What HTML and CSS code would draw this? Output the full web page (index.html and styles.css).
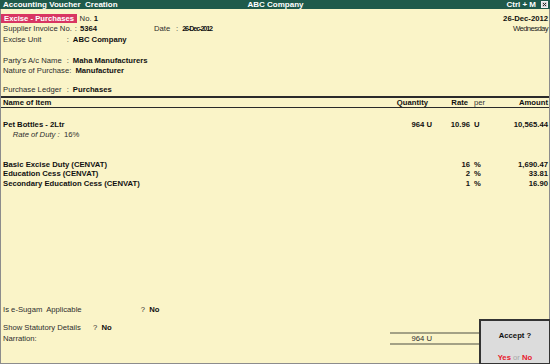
FILE: index.html
```html
<!DOCTYPE html>
<html>
<head>
<meta charset="utf-8">
<link rel="stylesheet" href="styles.css">
</head>
<body>
<div class="win">
  <div class="titlebar">
    <span class="t-left">Accounting Voucher&nbsp; Creation</span>
    <span class="t-center">ABC Company</span>
    <span class="t-right">Ctrl + M
      <svg class="close" viewBox="0 0 7 7"><rect x=".5" y=".5" width="6" height="6" fill="#d6d6d6" stroke="#f2f2f2"/><path d="M2 2l3 3M5 2l-3 3" stroke="#2a2a2a" stroke-width="1"/></svg>
    </span>
  </div>
  <div class="body">
    <div class="head">
      <div class="row">
        <span class="vtype">Excise - Purchases</span>
        <span class="vno">No. <b>1</b></span>
        <span class="rdate">26-Dec-2012</span>
      </div>
      <div class="row">
        <div class="fld sup"><span class="lbl">Supplier Invoice No.</span><span class="colon">:</span><span class="val">5364</span></div>
        <div class="fld"><span class="lbl l-date">Date</span><span class="colon">:</span><span class="val cond">26-Dec-2012</span></div>
        <span class="rday">Wednesday</span>
      </div>
      <div class="row r3">
        <div class="fld"><span class="lbl">Excise Unit</span><span class="colon">:</span><span class="val">ABC Company</span></div>
      </div>
      <div class="row r4">
        <div class="fld"><span class="lbl">Party's A/c Name</span><span class="colon">:</span><span class="val">Maha Manufacturers</span></div>
      </div>
      <div class="row">
        <div class="fld"><span class="lbl">Nature of Purchase</span><span class="colon">:</span><span class="val">Manufacturer</span></div>
      </div>
      <div class="row r6">
        <div class="fld"><span class="lbl">Purchase Ledger</span><span class="colon">:</span><span class="val">Purchases</span></div>
      </div>
    </div>

    <div class="items">
      <div class="grid ghead">
        <span>Name of Item</span>
        <span class="r h-qty">Quantity</span>
        <span class="r h-rate">Rate</span>
        <span class="per h-per">per</span>
        <span class="r">Amount</span>
      </div>
      <div class="grid bold item1">
        <span>Pet Bottles - 2Ltr</span>
        <span class="r">964 U</span>
        <span class="r">10.96</span>
        <span class="per">U</span>
        <span class="r">10,565.44</span>
      </div>
      <div class="grid duty">
        <span><i>Rate of Duty :</i>&nbsp; 16%</span>
      </div>
      <div class="grid bold tax1">
        <span>Basic Excise Duty (CENVAT)</span>
        <span></span>
        <span class="r">16</span>
        <span class="per">%</span>
        <span class="r">1,690.47</span>
      </div>
      <div class="grid bold">
        <span>Education Cess (CENVAT)</span>
        <span></span>
        <span class="r">2</span>
        <span class="per">%</span>
        <span class="r">33.81</span>
      </div>
      <div class="grid bold">
        <span>Secondary Education Cess (CENVAT)</span>
        <span></span>
        <span class="r">1</span>
        <span class="per">%</span>
        <span class="r">16.90</span>
      </div>
    </div>

    <div class="foot">
      <div class="frow esugam"><span class="flbl w1">Is e-Sugam&nbsp; Applicable</span><span>?</span><b class="ans">No</b></div>
      <div class="frow stat"><span class="flbl w2">Show Statutory Details</span><span>?</span><b class="ans">No</b></div>
      <div class="grid narr">
        <span>Narration:</span>
        <div class="total"><span>964 U</span></div>
      </div>
    </div>
  </div>

  <div class="accept">
    <div class="acc-q">Accept ?</div>
    <div class="acc-a"><span class="yn">Yes</span> <span class="or">or</span> <span class="yn">No</span></div>
  </div>
</div>
</body>
</html>
```

FILE: styles.css
```css
* { box-sizing: border-box; margin: 0; padding: 0; }
html, body { width: 550px; height: 364px; overflow: hidden; }
body {
  font-family: "Liberation Sans", Arial, sans-serif;
  font-size: 7.7px;
  line-height: 9.5px;
  color: #2e2e2e;
  background: #faf4c8;
}
b, .bold { font-weight: bold; color: #111; }

.win { position: relative; width: 550px; height: 364px; display: flex; flex-direction: column; }

.titlebar {
  height: 9px;
  background: #1f5a4b;
  color: #fff;
  font-weight: bold;
  font-size: 8px;
  line-height: 9px;
  display: grid;
  grid-template-columns: 1fr auto 1fr;
  padding: 0 2px 0 3px;
  white-space: nowrap;
}
.t-right { justify-self: end; display: flex; align-items: center; gap: 5px; }
.close { width: 7px; height: 7px; display: block; }

.body {
  flex: 1;
  display: flex;
  flex-direction: column;
  border: 1px solid #8c8c8c;
  border-top: 0;
  background: #faf4c8;
}

.head { padding: 5px 1px 0 2px; }
.row { display: flex; height: 9.5px; white-space: nowrap; }
.r3 { margin-top: 2px; }
.r4 { margin-top: 11.75px; }
.r6 { margin-top: 9.5px; }

.vtype {
  background: #d83562;
  color: #fff;
  font-weight: bold;
  margin-left: -2px;
  padding: 0 2.5px 0 3px;
  height: 9px;
  line-height: 9px;
}
.vno { margin-left: 3px; }
.rdate { margin-left: auto; font-weight: bold; color: #111; }
.rday { margin-left: auto; letter-spacing: -0.6px; color: #222; }

.fld { display: flex; }
.lbl { min-width: 63.7px; }
.val { margin-left: 4px; font-weight: bold; color: #111; }
.sup { width: 151px; }
.sup .colon { margin-left: 3px; }
.sup .val { margin-left: 3px; }
.l-date { min-width: 22px; }
.cond { letter-spacing: -1.1px; font-size: 7.2px; }

.grid {
  display: grid;
  grid-template-columns: 1fr 42px 38px 16px 62px;
  padding: 0 1px 0 2px;
  height: 9.5px;
  white-space: nowrap;
}
.r { text-align: right; }
.per { padding-left: 4px; }

.ghead {
  margin-top: 1.75px;
  height: 12px;
  line-height: 9px;
  border-top: 2px solid #2a2a2a;
  border-bottom: 1px solid #2a2a2a;
  font-weight: bold;
  color: #111;
}
.h-qty { padding-right: 4px; }
.h-rate { padding-right: 2px; }
.h-per { font-weight: normal; color: #333; }

.item1 { margin-top: 12.25px; }
.duty span { padding-left: 9.7px; }
.tax1 { margin-top: 20.5px; }

.foot { margin-top: auto; padding-bottom: 18px; }
.frow { display: flex; padding: 0 1px 0 2px; white-space: nowrap; }
.esugam { height: 9.5px; }
.stat { height: 8px; line-height: 8px; margin-top: 9.25px; }
.w1 { width: 137.7px; }
.w2 { width: 90px; }
.ans { margin-left: 4.2px; }

.narr { height: 13px; align-items: center; }
.total {
  grid-column: 2 / 6;
  height: 13px;
  line-height: 9px;
  border-top: 2px solid #a3a185;
  border-bottom: 2px solid #a3a185;
}
.total span { display: block; width: 42px; text-align: right; }

.accept {
  position: absolute;
  right: 0;
  bottom: 0;
  width: 71px;
  height: 45px;
  background: #dcdcdc;
  border: 1px solid #333;
  border-width: 2px 1px 1px 2px;
  text-align: center;
}
.acc-q { margin-top: 10.25px; font-weight: bold; color: #111; }
.acc-a { margin-top: 12px; }
.yn { color: #e8192c; font-weight: bold; }
.or { color: #a8a8a8; }
```
